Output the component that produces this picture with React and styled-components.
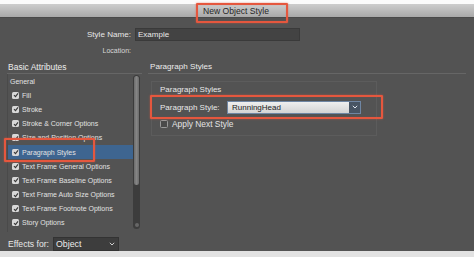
import React from "react";
import styled, { createGlobalStyle } from "styled-components";

const Global = createGlobalStyle`
  html, body { margin: 0; padding: 0; background: #ffffff; }
  body { font-family: "Liberation Sans", Arial, sans-serif; }
  * { box-sizing: border-box; }
`;

const Window = styled.div`
  width: 474px;
  height: 257px;
  display: flex;
  flex-direction: column;
  background: #e2e2e2;
  overflow: hidden;
`;

const TopStrip = styled.div`
  height: 4px;
  background: #fbfbfb;
`;

const TitleBar = styled.div`
  position: relative;
  height: 14px;
  background: linear-gradient(#cdcdcd, #a9a9a9);
  border-bottom: 1px solid #4a4a4a;
  display: flex;
  justify-content: center;
  align-items: center;
`;

const Title = styled.div`
  font-size: 8.6px;
  color: #262626;
  line-height: 14px;
  margin-left: -2px;
`;

const Highlight = styled.div`
  position: absolute;
  border: 2px solid #e5573e;
  box-shadow: 0 0 2px rgba(229, 87, 62, 0.7), inset 0 0 1px rgba(229, 87, 62, 0.5);
  pointer-events: none;
  border-radius: 1px;
`;

const Body = styled.div`
  height: 233px;
  background: #535353;
  padding: 9px 8px 0 7px;
  display: flex;
  flex-direction: column;
  color: #e4e4e4;
`;

const FieldRow = styled.div`
  display: flex;
  align-items: center;
  height: ${(p) => p.$h}px;
  margin-top: ${(p) => p.$mt || 0}px;
`;

const FieldLabel = styled.div`
  width: 124px;
  text-align: right;
  font-size: ${(p) => p.$size}px;
  color: ${(p) => p.$color || "#e6e6e6"};
`;

const TextInput = styled.div`
  margin-left: 4px;
  width: 165px;
  height: 13px;
  background: #434343;
  border: 1px solid #3a3a3a;
  font-size: 8px;
  line-height: 11px;
  padding-left: 2px;
  color: #e8e8e8;
`;

const Columns = styled.div`
  display: flex;
  margin-top: 7px;
`;

const LeftCol = styled.div`
  width: 135px;
  display: flex;
  flex-direction: column;
`;

const RightCol = styled.div`
  margin-left: 6px;
  flex: 1;
  display: flex;
  flex-direction: column;
`;

const SectionHeader = styled.div`
  height: 12px;
  line-height: 12px;
  font-size: ${(p) => p.$size || 8.5}px;
  color: #ececec;
  padding-left: ${(p) => p.$pl || 1}px;
`;

const Rule = styled.div`
  height: 1px;
  background: #666666;
`;

const ListBox = styled.div`
  height: 158px;
  display: flex;
  border-left: 1px solid #4a4a4a;
  background: #535353;
`;

const Rows = styled.div`
  flex: 1;
  display: flex;
  flex-direction: column;
`;

const Row = styled.div`
  position: relative;
  height: 14.2px;
  display: flex;
  align-items: center;
  gap: 3px;
  padding-left: ${(p) => (p.$group ? 2 : 4)}px;
  font-size: 7px;
  color: #e2e2e2;
  background: ${(p) => (p.$selected ? "#3e6590" : "transparent")};
`;

const Box = styled.span`
  width: ${(p) => p.$s || 7}px;
  height: ${(p) => p.$s || 7}px;
  border-radius: 1.5px;
  background: ${(p) => (p.$checked ? "#d8d8d8" : "#4a4a4a")};
  border: ${(p) => (p.$checked ? "none" : "1px solid #9a9a9a")};
  display: inline-flex;
  align-items: center;
  justify-content: center;
  flex: none;
`;

const Check = () => (
  <svg width="6" height="6" viewBox="0 0 6 6">
    <path d="M1 3.1 L2.5 4.6 L5 1.3" fill="none" stroke="#3a3a3a" strokeWidth="1.2" />
  </svg>
);

const Scroll = styled.div`
  width: 7px;
  margin: 1px 2px 3px 0;
  border-radius: 3.5px;
  background: #3c3c3c;
  display: flex;
  flex-direction: column;
  align-items: center;
  padding: 1px 0 2px;
`;

const Thumb = styled.div`
  width: 5px;
  height: 109px;
  border-radius: 2.5px;
  background: linear-gradient(90deg, #6c6c6c, #858585, #6c6c6c);
`;

const ScrollEnd = styled.div`
  margin-top: auto;
  width: 4px;
  height: 4px;
  border-radius: 2px;
  background: #666;
`;

const Footer = styled.div`
  display: flex;
  align-items: center;
  margin-top: 5px;
  height: 14px;
  padding-left: 1px;
`;

const FooterLabel = styled.div`
  font-size: 8.6px;
  color: #e8e8e8;
  width: 45px;
`;

const SmallSelect = styled.div`
  width: 66px;
  height: 14px;
  background: #3d3d3d;
  border: 1px solid #333;
  display: flex;
  align-items: center;
  justify-content: space-between;
  padding: 0 3px 0 2px;
  font-size: 8.8px;
  color: #ececec;
`;

const Chevron = ({ color = "#cfcfcf" }) => (
  <svg width="6" height="4" viewBox="0 0 6 4">
    <path d="M0.8 0.8 L3 3 L5.2 0.8" fill="none" stroke={color} strokeWidth="1" />
  </svg>
);

const Group = styled.div`
  margin: 7px 0 0 3px;
  width: 226px;
  height: 55px;
  border: 1px solid #5c5c5c;
  padding: 2px 0 0 8px;
  display: flex;
  flex-direction: column;
`;

const GroupTitle = styled.div`
  font-size: 8px;
  color: #e8e8e8;
  height: 12px;
  line-height: 12px;
`;

const StyleRow = styled.div`
  position: relative;
  display: flex;
  align-items: center;
  height: 16px;
  margin-top: 3px;
`;

const StyleLabel = styled.div`
  font-size: 8px;
  color: #e8e8e8;
  width: 67px;
`;

const Dropdown = styled.div`
  width: 134px;
  height: 13px;
  display: flex;
  border: 1px solid #6f86a3;
  background: linear-gradient(#efefef, #d3d3d3);
`;

const DropText = styled.div`
  flex: 1;
  font-size: 8px;
  line-height: 11px;
  padding-left: 4px;
  color: #222;
`;

const DropArrow = styled.div`
  width: 11px;
  background: #485564;
  display: flex;
  align-items: center;
  justify-content: center;
`;

const CheckRow = styled.div`
  display: flex;
  align-items: center;
  gap: 4px;
  margin-top: 4px;
  font-size: 8.4px;
  color: #e4e4e4;
`;

const items = [
  { label: "Fill" },
  { label: "Stroke" },
  { label: "Stroke & Corner Options" },
  { label: "Size and Position Options" },
  { label: "Paragraph Styles", selected: true },
  { label: "Text Frame General Options" },
  { label: "Text Frame Baseline Options" },
  { label: "Text Frame Auto Size Options" },
  { label: "Text Frame Footnote Options" },
  { label: "Story Options" },
];

export default function App() {
  return (
    <>
      <Global />
      <Window>
        <TopStrip />
        <TitleBar>
          <Title>New Object Style</Title>
          <Highlight style={{ left: 196, top: -1, width: 92, height: 20 }} />
        </TitleBar>
        <Body>
          <FieldRow $h={13} $mt={1}>
            <FieldLabel $size={8.1}>Style Name:</FieldLabel>
            <TextInput>Example</TextInput>
          </FieldRow>
          <FieldRow $h={10} $mt={5}>
            <FieldLabel $size={7} $color="#d8d8d8">Location:</FieldLabel>
          </FieldRow>
          <Columns>
            <LeftCol>
              <SectionHeader>Basic Attributes</SectionHeader>
              <Rule />
              <ListBox>
                <Rows>
                  <Row $group>General</Row>
                  {items.map((it) => (
                    <Row key={it.label} $selected={it.selected}>
                      <Box $checked>
                        <Check />
                      </Box>
                      {it.label}
                      {it.selected && (
                        <Highlight style={{ left: -4, top: -7, width: 91, height: 24 }} />
                      )}
                    </Row>
                  ))}
                </Rows>
                <Scroll>
                  <Thumb />
                  <ScrollEnd />
                </Scroll>
              </ListBox>
              <Footer>
                <FooterLabel>Effects for:</FooterLabel>
                <SmallSelect>
                  Object
                  <Chevron />
                </SmallSelect>
              </Footer>
            </LeftCol>
            <RightCol>
              <SectionHeader $size={8.1} $pl={2}>Paragraph Styles</SectionHeader>
              <Rule />
              <Group>
                <GroupTitle>Paragraph Styles</GroupTitle>
                <StyleRow>
                  <StyleLabel>Paragraph Style:</StyleLabel>
                  <Dropdown>
                    <DropText>RunningHead</DropText>
                    <DropArrow>
                      <Chevron color="#e0e6ee" />
                    </DropArrow>
                  </Dropdown>
                  <Highlight style={{ left: -10, top: -4, width: 233, height: 24 }} />
                </StyleRow>
                <CheckRow>
                  <Box $s={8} />
                  Apply Next Style
                </CheckRow>
              </Group>
            </RightCol>
          </Columns>
        </Body>
      </Window>
    </>
  );
}
